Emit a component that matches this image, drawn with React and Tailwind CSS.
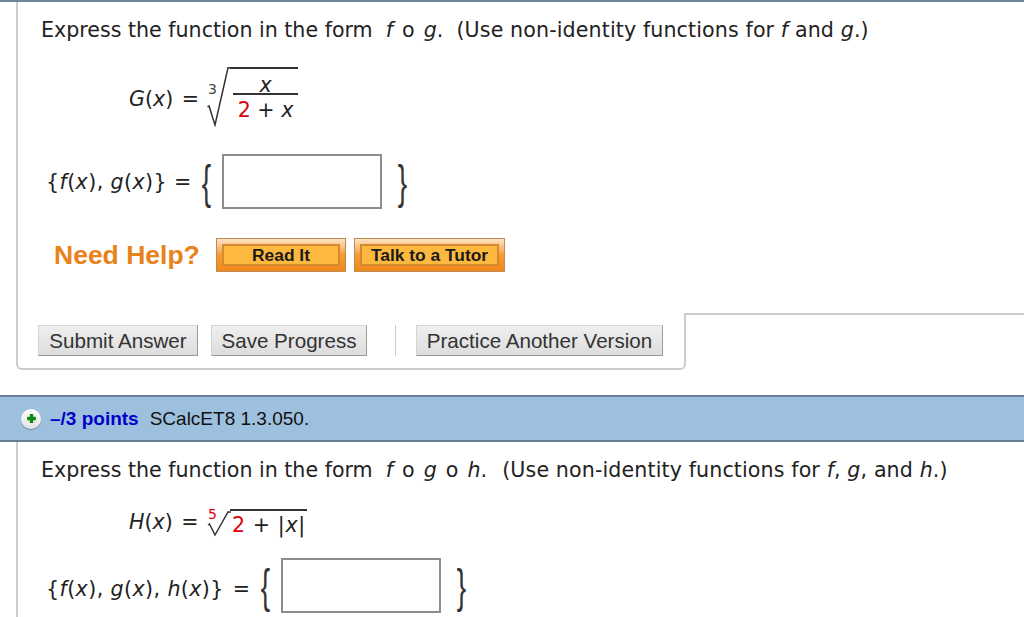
const DEJAVU = "font-['DejaVu_Sans',sans-serif]";
const ARIAL = "font-['Liberation_Sans',Arial,sans-serif]";

function Brace({ children }) {
  return (
    <span className="inline-block w-[11px] h-[46px] mt-[3px] leading-[46px] text-center text-[28px] scale-y-[1.65] font-['Liberation_Sans',sans-serif] text-[#333]">
      {children}
    </span>
  );
}

function Radical({ height, path, index, indexColor, top }) {
  return (
    <span className="relative inline-block shrink-0 w-6" style={{ height }}>
      <span className={`absolute left-px text-[14px] leading-none ${indexColor}`} style={{ top }}>{index}</span>
      <svg width="24" height={height} className="absolute left-0 top-0" fill="none" stroke="#333">
        <path d={path} strokeWidth="1.5" />
      </svg>
    </span>
  );
}

function ReadButton({ children, w }) {
  return (
    <button className={`h-[34px] ${w} p-[5px] border border-[#c08a55] bg-gradient-to-b from-[#fbe3c2] via-[#f79a2e] to-[#f08a1d]`}>
      <span className={`flex h-full items-center justify-center border-2 border-[#d58a32] bg-[#fdb93f] text-[17.4px] font-bold text-[#1a1a1a] ${ARIAL}`}>
        {children}
      </span>
    </button>
  );
}

function GreyButton({ children, w }) {
  return (
    <button className={`h-[31px] ${w} border border-[#d4d4d4] border-r-[#999] border-b-[#999] bg-gradient-to-b from-[#efefef] to-[#dddddd] text-[20.6px] text-[#333] ${ARIAL}`}>
      {children}
    </button>
  );
}

function AnswerBox({ w }) {
  return <span className={`block h-[55px] ${w} border-2 border-[#8c8c8c] bg-white`} />;
}

function Compose() {
  return <span className="mx-[2.5px]">o</span>;
}

export default function App() {
  return (
    <div className={`w-[1024px] h-[617px] overflow-hidden bg-white text-[20.6px] text-[#222] ${DEJAVU}`}>
      <div className="h-[2px] bg-[#6b8599]" />

      {/* first question */}
      <div className="ml-4">
        <div className="h-[311px] border-l-2 border-[#cccccc] pl-[23px]">
          <p className="pt-[15px] leading-[26px] whitespace-pre">
            Express the function in the form  <i>f</i> <Compose /> <i>g</i>.  <span className="tracking-[0.12px]">(Use non-identity functions for <i>f</i> and <i>g</i>.)</span>
          </p>

          <div className="mt-[24px] ml-[88px] flex items-center h-[60px]">
            <span className="w-[78px] whitespace-pre pt-[5px]"><i>G</i>(<i>x</i>) <span className="ml-[2px]">=</span></span>
            <Radical height={60} path="M0.5 40l1.5 -1L8 58L21 0.8H24" index="3" indexColor="text-[#444]" top={15} />
            <span className="w-[68px] h-[60px] -ml-px border-t-2 border-[#333] flex flex-col items-end">
              <span className="w-[65px] h-[26px] text-center leading-[32px] border-b-2 border-[#333]"><i>x</i></span>
              <span className="w-[65px] text-center leading-[30px] whitespace-pre"><span className="text-[#d8000c]">2</span> + <i>x</i></span>
            </span>
          </div>

          <div className="mt-[27px] ml-[5px] flex items-center h-[55px]">
            <span className="w-[155px] whitespace-pre pt-[2px] tracking-[0.4px]">{"{"}<i>f</i>(<i>x</i>), <i>g</i>(<i>x</i>){"}"} =</span>
            <Brace>{"{"}</Brace>
            <span className="w-[10px]" />
            <AnswerBox w="w-[160px]" />
            <span className="w-[15px]" />
            <Brace>{"}"}</Brace>
          </div>

          <div className="mt-[28px] ml-[13px] flex items-center h-[36px]">
            <span className={`w-[162px] pt-px text-[26.5px] font-bold text-[#e8831c] ${ARIAL}`}>Need Help?</span>
            <ReadButton w="w-[130px]">Read It</ReadButton>
            <span className="w-2" />
            <ReadButton w="w-[151px]">Talk to a Tutor</ReadButton>
          </div>
        </div>

        <div className="flex">
          <div className="w-[670px] h-[57px] border-2 border-t-0 border-[#cccccc] rounded-b-md pt-[12px] pl-[20px] flex items-start">
            <GreyButton w="w-[160px]">Submit Answer</GreyButton>
            <span className="w-[13px]" />
            <GreyButton w="w-[156px]">Save Progress</GreyButton>
            <span className="ml-[28px] mr-5 w-px h-[31px] bg-[#cccccc]" />
            <GreyButton w="w-[247px]">Practice Another Version</GreyButton>
          </div>
          <div className="flex-1 border-t-2 border-[#cccccc]" />
        </div>
      </div>

      {/* second question header */}
      <div className={`mt-[25px] h-[47px] border-y-2 border-y-[#667f96] bg-[#9dc0de] flex items-center pl-[21px] text-[19px] ${ARIAL}`}>
        <span className="flex items-center justify-center w-5 h-5 rounded-full bg-gradient-to-b from-white to-[#e2e2e2] shadow-[0_1px_1px_rgba(0,0,0,0.3)]">
          <svg width="11" height="11" viewBox="0 0 10 10"><path d="M5 1v8M1 5h8" stroke="#0a8a12" strokeWidth="3" /></svg>
        </span>
        <b className="ml-[9px] pt-px text-[#0000c8]">–/3 points</b>
        <span className="ml-[11px] pt-px text-[#111]">SCalcET8 1.3.050.</span>
      </div>

      {/* second question */}
      <div className="ml-4 border-l-2 border-[#cccccc] pl-[23px] h-[176px]">
        <p className="pt-[15px] leading-[26px] whitespace-pre">
          Express the function in the form  <i>f</i> <Compose /> <i>g</i> <Compose /> <i>h</i>.  <span className="ml-[2px] tracking-[0.12px]">(Use non-identity functions for <i>f</i>, <i>g</i>, and <i>h</i>.)</span>
        </p>

        <div className="mt-[26px] ml-[88px] flex items-center h-[30px]">
          <span className="w-[78px] whitespace-pre pb-[3px]"><i>H</i>(<i>x</i>) <span className="ml-[2px]">=</span></span>
          <Radical height={26} path="M1 14l1.5 -1L8 24L21 1H24" index="5" indexColor="text-[#e0000f]" top={-4} />
          <span className="-ml-px h-[28px] border-t-2 border-[#333] leading-[28px] whitespace-pre pl-[2px] pr-[1px] self-start tracking-[0.6px]"><span className="text-[#e0000f]">2</span> + |<i>x</i>|</span>
        </div>

        <div className="mt-[19px] ml-[5px] flex items-center h-[55px]">
          <span className="w-[214px] whitespace-pre pt-[7px] tracking-[0.4px]">{"{"}<i>f</i>(<i>x</i>), <i>g</i>(<i>x</i>), <i>h</i>(<i>x</i>){"}"} <span className="ml-[2px]">=</span></span>
          <Brace>{"{"}</Brace>
          <span className="w-[10px]" />
          <AnswerBox w="w-[160px]" />
          <span className="w-[15px]" />
          <Brace>{"}"}</Brace>
        </div>
      </div>
    </div>
  );
}
